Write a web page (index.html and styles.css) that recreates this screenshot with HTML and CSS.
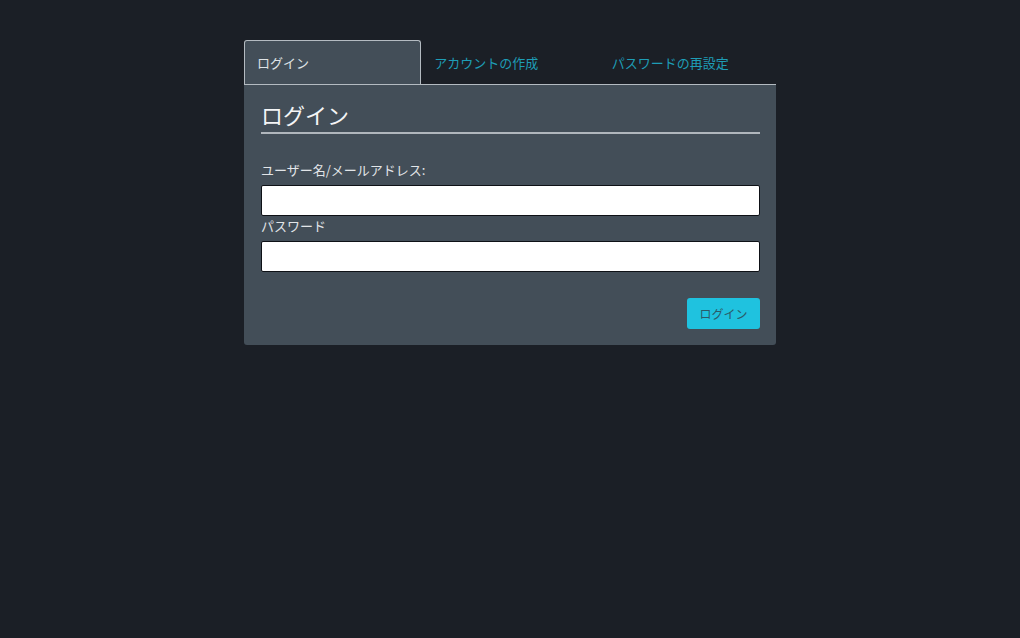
FILE: index.html
```html
<!DOCTYPE html>
<html lang="ja">
<head>
<meta charset="utf-8">
<title>ログイン</title>
<link rel="stylesheet" href="styles.css">
</head>
<body>
<div class="wrap">
  <div class="tabs">
    <div class="tab active">ログイン</div>
    <a class="tab" href="#">アカウントの作成</a>
    <a class="tab" href="#">パスワードの再設定</a>
  </div>
  <div class="panel">
    <h2 class="title">ログイン</h2>
    <form class="form">
      <label class="label" for="user">ユーザー名/メールアドレス:</label>
      <input class="input" id="user" type="text">
      <label class="label" for="pass">パスワード</label>
      <input class="input" id="pass" type="password">
      <div class="actions">
        <button class="btn" type="button">ログイン</button>
      </div>
    </form>
  </div>
</div>
</body>
</html>
```
FILE: styles.css
```css
html, body {
  margin: 0;
  padding: 0;
  background: #1b1f26;
}
body {
  font-family: "Noto Sans CJK JP", "Noto Sans", sans-serif;
  color: #e4e7ea;
}
.wrap {
  width: 532px;
  margin: 40px auto 0;
}
.tabs {
  display: flex;
  height: 45px;
  border-bottom: 1px solid #b4bbc1;
  box-sizing: border-box;
}
.tab {
  width: 178px;
  box-sizing: border-box;
  padding: 0 12px;
  display: flex;
  align-items: center;
  font-size: 13px;
  color: #1e9db6;
  text-decoration: none;
  border: 1px solid transparent;
  border-bottom: none;
}
.tab.active {
  background: #434e58;
  border-color: #b4bbc1;
  border-radius: 3px 3px 0 0;
  color: #dfe3e6;
}
.panel {
  background: #434e58;
  padding: 14px 16px 16px 17px;
  border-radius: 0 0 3px 3px;
}
.title {
  margin: 0;
  font-size: 22px;
  font-weight: normal;
  line-height: 30px;
  padding-bottom: 3px;
  color: #f4f5f6;
  border-bottom: 2px solid #b0b6bc;
}
.form {
  display: flex;
  flex-direction: column;
  margin-top: 27px;
}
.label {
  font-size: 13px;
  line-height: 17px;
  margin-bottom: 7px;
  color: #e2e5e8;
}
.input {
  height: 31px;
  box-sizing: border-box;
  border: 1px solid #0e1116;
  border-radius: 2px;
  background: #fff;
  margin: 0 0 1px;
}
.actions {
  display: flex;
  justify-content: flex-end;
  margin-top: 25px;
}
.btn {
  height: 31px;
  width: 73px;
  border: none;
  border-radius: 3px;
  background: #1fc2df;
  color: #2b5a68;
  font-family: inherit;
  font-size: 12px;
  padding: 0;
}
```
